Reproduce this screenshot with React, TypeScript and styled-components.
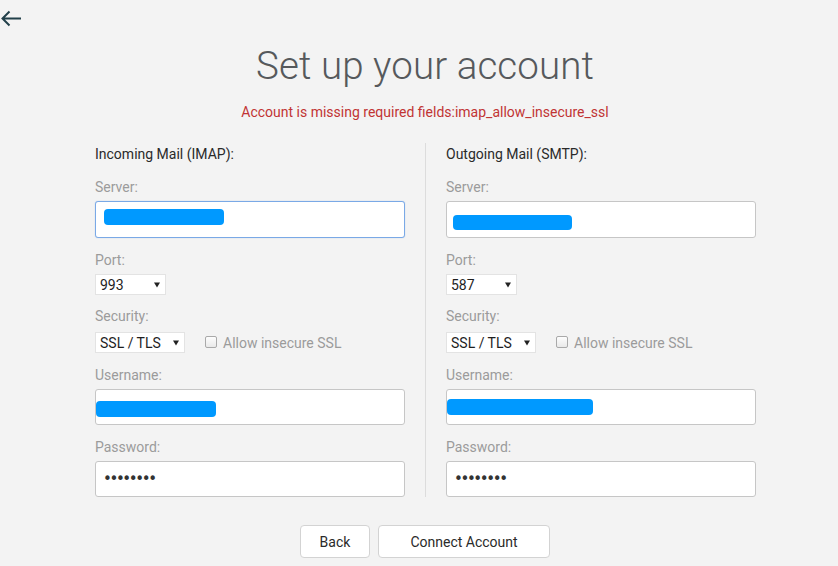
import React from "react";
import styled, { createGlobalStyle } from "styled-components";

const Global = createGlobalStyle`
  html, body { margin: 0; padding: 0; background: #f3f3f3; }
  body { font-family: Roboto, "Liberation Sans", sans-serif; font-size: 14px; color: #333; }
  * { box-sizing: border-box; }
`;

const Page = styled.div`
  position: relative;
  width: 838px;
  height: 566px;
  overflow: hidden;
  background: #f3f3f3;
`;

const BackArrow = styled.button`
  display: block;
  margin: 10px 0 0 0;
  padding: 0;
  border: 0;
  background: transparent;
  width: 22px;
  height: 18px;
  cursor: pointer;
`;

const Main = styled.div`
  width: 660px;
  margin-left: 95px;
  display: flex;
  flex-direction: column;
  align-items: stretch;
`;

const Title = styled.h1`
  margin: 16px 0 0 0;
  font-weight: 300;
  font-size: 38.5px;
  line-height: 44px;
  letter-spacing: 0.1px;
  color: #56595c;
  text-align: center;
`;

const ErrorText = styled.div`
  margin-top: 14px;
  line-height: 20px;
  font-size: 14px;
  color: #c13434;
  text-align: center;
`;

const Columns = styled.div`
  margin-top: 21px;
  display: grid;
  grid-template-columns: 310px 1px 310px;
  column-gap: 20px;
  padding-bottom: 8px;
`;

const Divider = styled.div`
  background: #dcdcdc;
`;

const Column = styled.div`
  display: flex;
  flex-direction: column;
  padding-top: 1px;
`;

const Heading = styled.div`
  line-height: 20px;
  font-size: 14px;
  color: #2a2a2a;
`;

const Group = styled.div<{ $mt: number }>`
  margin-top: ${(p) => p.$mt}px;
  display: flex;
  flex-direction: column;
`;

const Label = styled.div<{ $mb?: number }>`
  line-height: 20px;
  font-size: 14px;
  color: #9b9b9b;
  margin-bottom: ${(p) => p.$mb ?? 4}px;
`;

const Field = styled.div<{ $focused?: boolean; $h: number }>`
  height: ${(p) => p.$h}px;
  width: 100%;
  background: #fff;
  border: 1px solid ${(p) => (p.$focused ? "#7aa9e6" : "#c6c6c6")};
  border-radius: 3px;
  box-shadow: ${(p) => (p.$focused ? "0 0 1px rgba(90,150,230,0.5)" : "none")};
  display: flex;
  align-items: flex-start;
`;

const Redaction = styled.span<{ $x: number; $y: number; $w: number; $h: number }>`
  display: block;
  margin-left: ${(p) => p.$x}px;
  margin-top: ${(p) => p.$y}px;
  width: ${(p) => p.$w}px;
  height: ${(p) => p.$h}px;
  background: #0099ff;
  border-radius: 4px;
`;

const Dots = styled.span`
  display: block;
  margin: 8px 0 0 7px;
  font-family: "DejaVu Sans", sans-serif;
  font-size: 15px;
  line-height: 18px;
  letter-spacing: -2.4px;
  color: #333;
`;

const Row = styled.div`
  display: flex;
  align-items: center;
`;

const Select = styled.div<{ $w: number }>`
  width: ${(p) => p.$w}px;
  height: 21px;
  background: #fff;
  border: 1px solid #e3e3e3;
  display: flex;
  align-items: center;
  justify-content: space-between;
  padding: 0 5px 0 4px;
  font-size: 14px;
  color: #1e1e1e;
`;

const Caret = styled.svg`
  width: 6px;
  height: 6px;
  display: block;
`;

const CheckLabel = styled.label`
  margin-left: 20px;
  display: flex;
  align-items: center;
  color: #9b9b9b;
  font-size: 14px;
`;

const CheckBox = styled.span`
  width: 12px;
  height: 12px;
  border: 1px solid #a9a9a9;
  border-radius: 2px;
  background: linear-gradient(#fdfdfd, #e9e9e9);
  margin-right: 6px;
  margin-top: -2px;
`;

const Buttons = styled.div`
  margin-top: 20px;
  display: flex;
  justify-content: center;
  gap: 8px;
`;

const Button = styled.button<{ $w: number }>`
  width: ${(p) => p.$w}px;
  height: 33px;
  background: #fff;
  border: 1px solid #d3d3d3;
  border-radius: 4px;
  font-family: Roboto, "Liberation Sans", sans-serif;
  font-size: 14px;
  color: #2a2a2a;
  padding: 0;
`;

const SelectBox = ({ value, w }: { value: string; w: number }) => (
  <Select $w={w}>
    <span>{value}</span>
    <Caret viewBox="0 0 6 6">
      <polygon points="0,0.5 6,0.5 3,5.5" fill="#222" />
    </Caret>
  </Select>
);

type ColProps = {
  title: string;
  port: string;
  serverRed: [number, number, number, number];
  userRed: [number, number, number, number];
  focused?: boolean;
};

const MailColumn = ({ title, port, serverRed, userRed, focused }: ColProps) => (
  <Column>
    <Heading>{title}</Heading>
    <Group $mt={13}>
      <Label>Server:</Label>
      <Field $h={37} $focused={focused}>
        <Redaction $x={serverRed[0]} $y={serverRed[1]} $w={serverRed[2]} $h={serverRed[3]} />
      </Field>
    </Group>
    <Group $mt={12}>
      <Label>Port:</Label>
      <Row>
        <SelectBox value={port} w={71} />
      </Row>
    </Group>
    <Group $mt={11}>
      <Label $mb={6}>Security:</Label>
      <Row>
        <SelectBox value="SSL / TLS" w={90} />
        <CheckLabel>
          <CheckBox />
          Allow insecure SSL
        </CheckLabel>
      </Row>
    </Group>
    <Group $mt={12}>
      <Label>Username:</Label>
      <Field $h={36}>
        <Redaction $x={userRed[0]} $y={userRed[1]} $w={userRed[2]} $h={userRed[3]} />
      </Field>
    </Group>
    <Group $mt={12}>
      <Label>Password:</Label>
      <Field $h={36}>
        <Dots>••••••••</Dots>
      </Field>
    </Group>
  </Column>
);

export default function App() {
  return (
    <Page>
      <Global />
      <BackArrow aria-label="Back">
        <svg width="22" height="18" viewBox="0 0 22 18">
          <path d="M21 8.5 H2.5 M9.5 1.5 L2.5 8.5 L9.5 15.5" fill="none" stroke="#22404a" strokeWidth="2" />
        </svg>
      </BackArrow>
      <Main>
        <Title>Set up your account</Title>
        <ErrorText>Account is missing required fields:imap_allow_insecure_ssl</ErrorText>
        <Columns>
          <MailColumn
            title="Incoming Mail (IMAP):"
            port="993"
            serverRed={[8, 7, 120, 16]}
            userRed={[0, 11, 120, 16]}
            focused
          />
          <Divider />
          <MailColumn
            title="Outgoing Mail (SMTP):"
            port="587"
            serverRed={[6, 13, 119, 15]}
            userRed={[0, 9, 146, 16]}
          />
        </Columns>
        <Buttons>
          <Button $w={70}>Back</Button>
          <Button $w={172}>Connect Account</Button>
        </Buttons>
      </Main>
    </Page>
  );
}
